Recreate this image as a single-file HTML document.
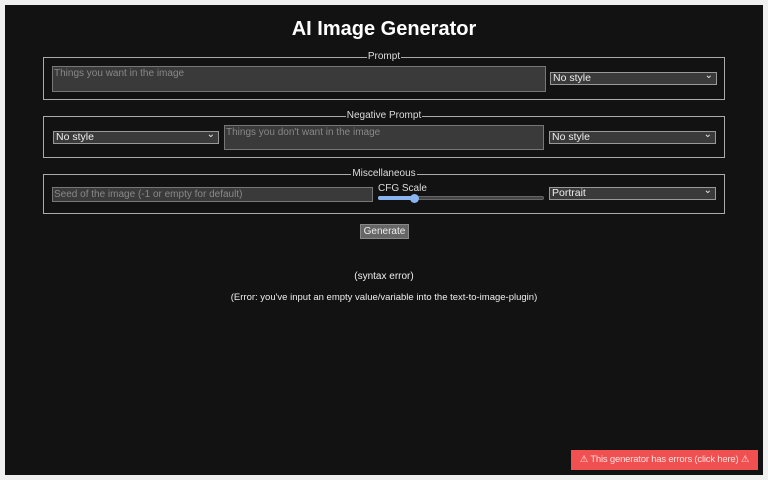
<!DOCTYPE html>
<html style="overflow:hidden;height:480px"><head><style>
body{margin:0;width:768px;height:480px;background:#f0f0f0;font-family:"Liberation Sans",sans-serif;overflow:hidden;position:relative}
.main{position:absolute;left:5px;top:5px;width:758px;height:470px;background:#121212}
.a{position:absolute}
.fs{position:absolute;left:43px;width:680px;border:1px solid #aaa}
.lg{position:absolute;top:-7px;left:0;right:0;text-align:center;font-size:10px;color:#ddd;line-height:12px}
.lg span{background:#121212;padding:0 1px}
.ta{position:absolute;background:#3a3a3a;border:1px solid #777;color:#888;font-size:10px;box-sizing:border-box;padding:1px 1px;line-height:12px}
.sel{position:absolute;background:#3a3a3a;border:1px solid #999;color:#eee;font-size:10.5px;box-sizing:border-box;padding:0 2px;line-height:11px;height:13px}
.sel:after{content:"⌄";position:absolute;right:3px;top:-3px;font-size:10px}
.t{position:absolute;left:0;width:768px;text-align:center;color:#eee;font-size:10px}
</style></head><body>
<div class="main"></div>
<div class="t" style="top:18px;font-size:20px;font-weight:bold;color:#fff">AI Image Generator</div>

<div class="fs" style="top:57px;height:41px"><div class="lg"><span>Prompt</span></div></div>
<div class="ta" style="left:52px;top:66px;width:494px;height:26px">Things you want in the image</div>
<div class="sel" style="left:550px;top:72px;width:167px">No style</div>

<div class="fs" style="top:116px;height:40px"><div class="lg"><span>Negative Prompt</span></div></div>
<div class="sel" style="left:53px;top:131px;width:166px">No style</div>
<div class="ta" style="left:224px;top:125px;width:320px;height:25px">Things you don't want in the image</div>
<div class="sel" style="left:549px;top:131px;width:167px">No style</div>

<div class="fs" style="top:174px;height:38px"><div class="lg"><span>Miscellaneous</span></div></div>
<div class="ta" style="left:52px;top:187px;width:321px;height:15px;line-height:12px">Seed of the image (-1 or empty for default)</div>
<div class="a" style="left:378px;top:183px;font-size:10px;color:#ddd">CFG Scale</div>
<div class="a" style="left:378px;top:196px;width:166px;height:4px;background:#444;border:1px solid #666;border-radius:3px;box-sizing:border-box"></div>
<div class="a" style="left:378px;top:196px;width:36px;height:4px;background:#8ab4f0;border-radius:3px"></div>
<div class="a" style="left:410px;top:194px;width:9px;height:9px;background:#8ab4f0;border-radius:50%"></div>
<div class="sel" style="left:549px;top:187px;width:167px">Portrait</div>

<div class="a" style="left:360px;top:224px;width:49px;height:15px;background:#666;border:1px solid #888;box-sizing:border-box;color:#eee;font-size:10px;text-align:center;line-height:13px">Generate</div>

<div class="t" style="top:271px">(syntax error)</div>
<div class="t" style="top:292px;font-size:9.5px">(Error: you've input an empty value/variable into the text-to-image-plugin)</div>

<div class="a" style="left:571px;top:450px;width:187px;height:20px;background:#f05050;color:#ffe0e0;font-size:9.5px;letter-spacing:-0.2px;white-space:nowrap;text-align:center;line-height:20px">⚠ This generator has errors (click here) ⚠</div>
</body></html>
